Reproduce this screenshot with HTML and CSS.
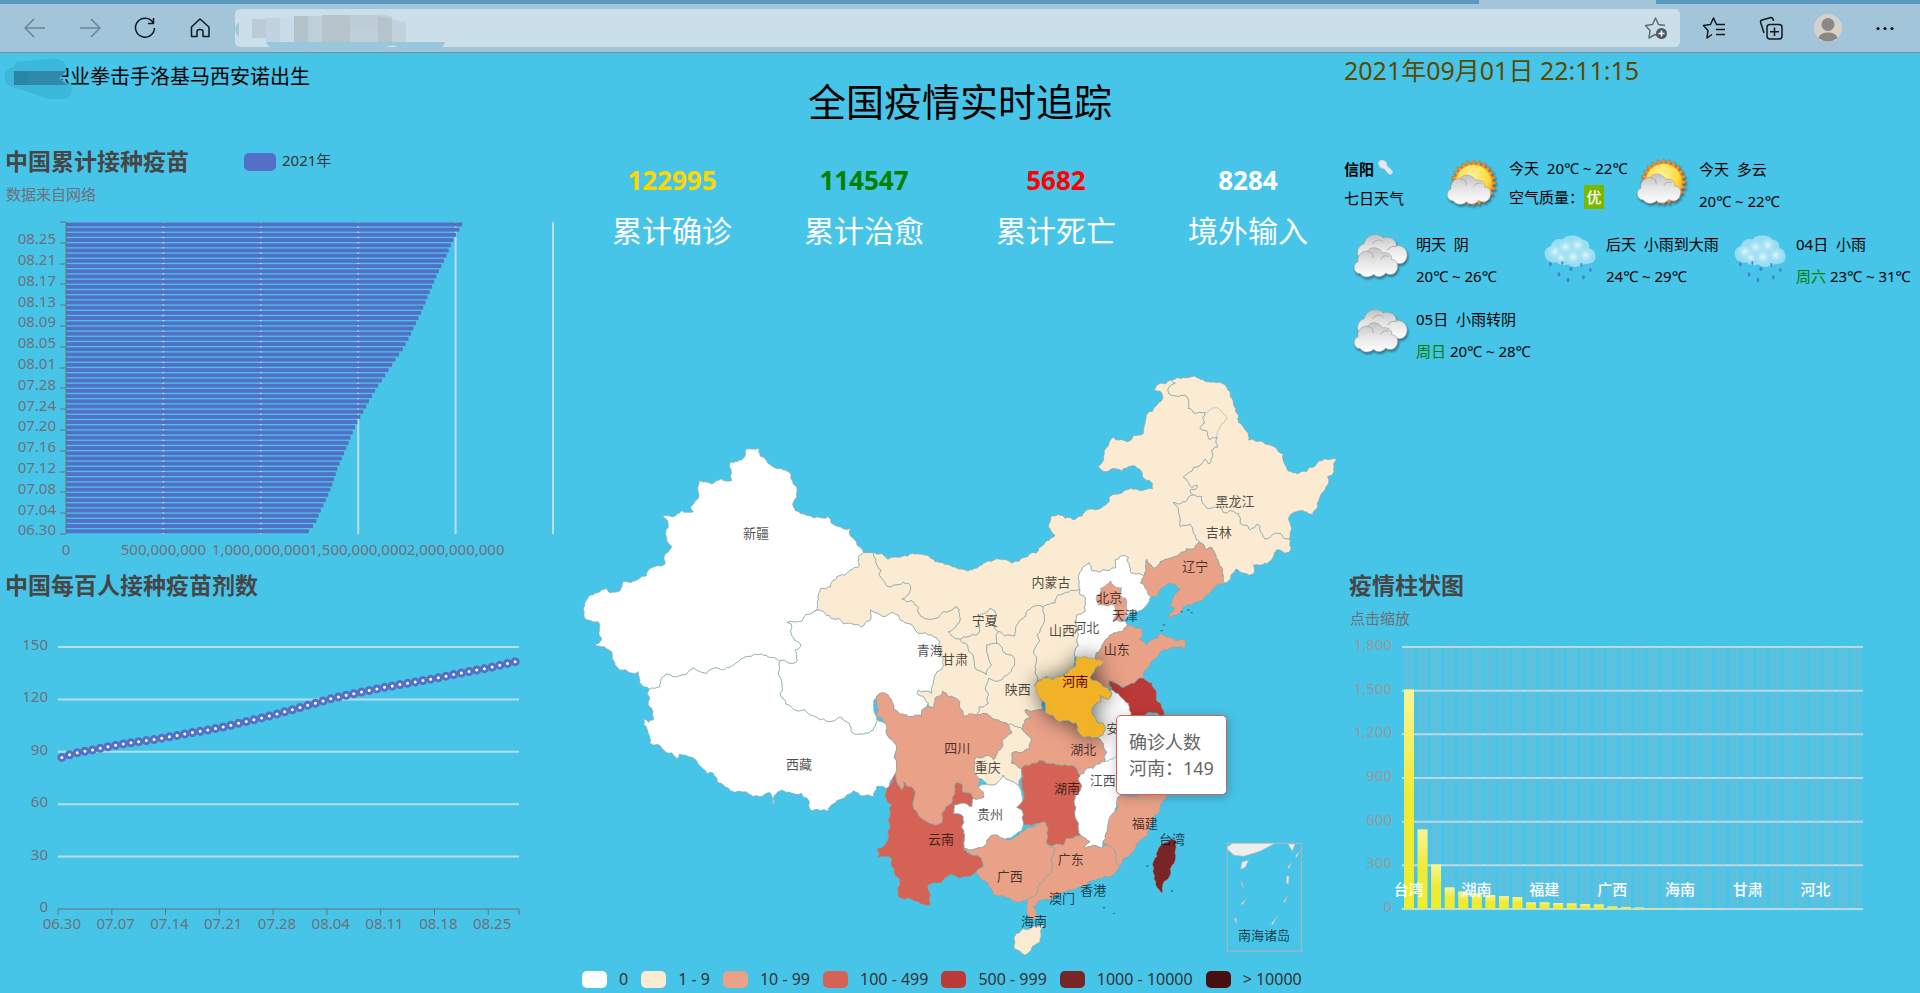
FILE: index.html
```html
<!DOCTYPE html>
<html lang="zh-CN">
    <head>
        <meta charset="UTF-8">
        <title>全国疫情实时追踪</title>
        <link rel="stylesheet" href="styles.css">
    </head>
    <body>
        <svg class="sprite" aria-hidden="true">
            <defs>
                <linearGradient id="cloud_fill" x1="0" y1="0" x2="0" y2="1">
                    <stop offset="0" stop-color="#c2c2c2"/>
                    <stop offset="0.45" stop-color="#e4e4e4"/>
                    <stop offset="1" stop-color="#ffffff"/>
                </linearGradient>
                <radialGradient id="sun_fill" cx="0.45" cy="0.3" r="0.75">
                    <stop offset="0" stop-color="#fff3a0"/>
                    <stop offset="0.6" stop-color="#fddc3c"/>
                    <stop offset="1" stop-color="#f8a81c"/>
                </radialGradient>
                <radialGradient id="rain_fill">
                    <stop offset="0" stop-color="#e2f8fd"/>
                    <stop offset="1" stop-color="#a2e1f3" stop-opacity="0"/>
                </radialGradient>
            </defs>
            <symbol id="overcast" viewBox="0 0 165 150">
                <path class="cloud" d="M25 80C6 66 12 38 34 32C38 5 75 -4 90 15C110 8 130 20 130 38C150 36 165 52 162 70C160 88 145 97 130 90L40 90Z"/>
                <path class="cloud_fold" d="M60 32C68 18 86 18 92 28M104 50C108 42 120 38 130 40"/>
                <path class="cloud" d="M22 122C0 122 -2 92 15 86C12 64 30 52 45 54C50 39 82 42 88 60C105 56 118 66 116 80C135 80 138 102 130 114C124 126 108 128 98 120C88 134 70 134 62 124C50 136 30 134 22 122Z"/>
                <path class="cloud_fold" d="M44 56C58 56 62 66 60 74M84 78C88 68 98 66 106 70"/>
            </symbol>
            <symbol id="sunny" viewBox="0 0 165 150">
                <polygon id="sun_rays" fill="#f4962a" stroke="#d56a14" stroke-width="2"/>
                <circle cx="83" cy="72" r="54" fill="url(#sun_fill)"/>
                <path class="cloud" d="M22 126C0 126 -2 96 15 90C12 68 30 56 45 58C50 43 82 46 88 64C105 60 118 70 116 84C135 84 138 106 130 118C124 130 108 132 98 124C88 138 70 138 62 128C50 140 30 138 22 126Z"/>
                <path class="cloud_fold" d="M44 60C58 60 62 70 60 78M84 82C88 72 98 70 106 74"/>
            </symbol>
            <symbol id="rainy" viewBox="0 0 165 150">
                <path fill="#97dcf1" d="M22 86C-2 78 0 44 24 40C26 22 46 14 58 20C66 4 108 2 118 20C136 20 142 36 138 46C158 48 164 76 150 88C136 96 124 92 116 96C100 106 84 102 76 94C62 100 48 96 42 88C34 90 28 90 22 86Z"/>
                <g fill="url(#rain_fill)">
                    <circle cx="36" cy="56" r="26"/><circle cx="68" cy="42" r="26"/><circle cx="104" cy="36" r="26"/>
                    <circle cx="128" cy="66" r="26"/><circle cx="90" cy="72" r="28"/><circle cx="54" cy="74" r="20"/>
                </g>
                <g fill="#4384d6">
                    <ellipse cx="22" cy="94" rx="4" ry="7"/><ellipse cx="58" cy="90" rx="3" ry="6"/><ellipse cx="84" cy="108" rx="5" ry="6"/>
                    <ellipse cx="115" cy="96" rx="3" ry="6"/><ellipse cx="142" cy="111" rx="4" ry="6"/><ellipse cx="48" cy="124" rx="4" ry="7"/>
                    <ellipse cx="121" cy="133" rx="4" ry="7"/><ellipse cx="75" cy="141" rx="4" ry="7"/>
                </g>
            </symbol>
        </svg>

        <header class="browser">
            <div class="tab_strip"><span class="tab_active"></span></div>
            <div class="toolbar">
                <button class="tool dim" aria-label="后退"><svg viewBox="0 0 24 24"><path d="M22 12H2.500M11 3L2 12L11 21"/></svg></button>
                <button class="tool dim" aria-label="前进"><svg viewBox="0 0 24 24"><path d="M2 12H21.500M13 3L22 12L13 21"/></svg></button>
                <button class="tool" aria-label="刷新"><svg viewBox="0 0 24 24"><path d="M20 6.500A9.500 9.500 0 1 0 21.500 12M20.500 2V7.500H15"/></svg></button>
                <button class="tool" aria-label="主页"><svg viewBox="0 0 24 24"><path d="M12 3L21 11V20.500H15V15.500Q15 13.500 12 13.500T9 15.500V20.500H3.500V11Z"/></svg></button>
                <div class="address">
                    <input class="address_input" type="text" aria-label="地址">
                    <svg class="address_mask" viewBox="0 0 220 46" aria-hidden="true">
                        <path fill="#a3c8dc" d="M4 13Q-4 20 4 28Z"/>
                        <path fill="#bcccd6" d="M17 10H31V29H17Z"/>
                        <path fill="#c2d2de" d="M31 9H59V33H31Z"/>
                        <path fill="#c8dbe8" d="M45 9H59V33H45Z"/>
                        <path fill="#b3c2cb" d="M59 7H73V33H59Z"/>
                        <path fill="#bfcfda" d="M73 7L150 6L157 8V33H73Z"/>
                        <path fill="#b5c3cb" d="M87 6H115V33H87ZM143 7L157 10V33H143Z"/>
                        <path fill="#bdccd5" d="M115 6H143V19H115Z"/>
                        <path fill="#c2d3de" d="M157 10L164 12L171 13V33H157Z"/>
                        <path fill="#97c8dd" d="M31 33H210Q208 39 202 41H170L158 36L140 41H86L76 38L60 41H40Q33 38 31 33Z"/>
                    </svg>
                    <button class="tool favorite" aria-label="收藏"><svg viewBox="0 0 24 24"><path d="M14 20L11 18.500L5 22L6 14.500L1.500 9.500L8.500 8.500L11.500 2L14.500 8.500L21 9.500"/><circle class="solid" cx="17.500" cy="17.500" r="5.500"/><path class="plus" d="M17.500 14.500V20.500M14.500 17.500H20.500"/></svg></button>
                </div>
                <button class="tool" aria-label="收藏夹"><svg viewBox="0 0 24 24"><path d="M10 18.500L5 22L6 14.500L1.500 9.500L8.500 8.500L11.500 2L14.500 8.500H23M14 13.500H23M14 18.500H23"/></svg></button>
                <button class="tool" aria-label="集锦"><svg viewBox="0 0 24 24"><path d="M5 17L1.500 6Q1.500 4 3 4L12 1.500Q14 1.500 14.500 5"/><rect x="8" y="8.500" width="15" height="14.500" rx="3"/><path d="M15.500 11.500V20M11 15.700H20"/></svg></button>
                <button class="tool avatar" aria-label="用户"><svg viewBox="0 0 28 28"><circle cx="14" cy="14" r="14" fill="#d5d1cd"/><circle cx="14" cy="10.500" r="6.500" fill="#8b8784"/><path fill="#8b8784" d="M4.500 24Q6 18.500 14 18.500T23.500 24Q14 31 4.500 24Z"/></svg></button>
                <button class="tool" aria-label="更多"><svg viewBox="0 0 24 24"><g class="dots"><circle cx="5" cy="12.500" r="1.600"/><circle cx="12" cy="12.500" r="1.600"/><circle cx="19" cy="12.500" r="1.600"/></g></svg></button>
            </div>
        </header>

        <main class="board">
            <section class="column">
                <div class="history">
                    美国职业拳击手洛基马西安诺出生
                    <svg class="smudge" viewBox="0 0 76 44" aria-hidden="true">
                        <path fill="#3bb7da" d="M5 16Q8 10 14 10L16 5L48 2Q68 0 66 14L60 22L71 28Q74 38 66 42H48L20 32Q2 30 5 16Z"/>
                        <path fill="#2787a4" d="M14 14H28V28H14Z"/>
                        <path fill="#2f8aa9" d="M28 14H66L59 22L68 28H28Z"/>
                    </svg>
                </div>
                <svg class="chart" id="total_chart" viewBox="0 0 576 420" role="img" aria-label="中国累计接种疫苗"></svg>
                <svg class="chart" id="hundred_chart" viewBox="0 0 576 431" role="img" aria-label="中国每百人接种疫苗剂数"></svg>
            </section>

            <section class="column">
                <h1 class="title">全国疫情实时追踪</h1>
                <div class="stats">
                    <div class="stat"><b class="number gold">122995</b><span class="caption">累计确诊</span></div>
                    <div class="stat"><b class="number green">114547</b><span class="caption">累计治愈</span></div>
                    <div class="stat"><b class="number red">5682</b><span class="caption">累计死亡</span></div>
                    <div class="stat"><b class="number">8284</b><span class="caption">境外输入</span></div>
                </div>
                <div class="map">
                    <svg class="chart" id="china_map" viewBox="0 0 2304 1794" role="img" aria-label="疫情地图"></svg>
                    <div class="tooltip">确诊人数<br>河南：149</div>
                </div>
                <ul class="legend">
                    <li><i class="swatch level_0"></i>0</li>
                    <li><i class="swatch level_1"></i>1 - 9</li>
                    <li><i class="swatch level_2"></i>10 - 99</li>
                    <li><i class="swatch level_3"></i>100 - 499</li>
                    <li><i class="swatch level_4"></i>500 - 999</li>
                    <li><i class="swatch level_5"></i>1000 - 10000</li>
                    <li><i class="swatch level_6"></i>&gt; 10000</li>
                </ul>
            </section>

            <section class="column">
                <time class="clock">2021年09月01日 22:11:15</time>
                <div class="weather">
                    <div class="weather_row">
                        <div class="place">
                            <div><b>信阳</b><svg class="wrench" viewBox="0 0 16 16"><path fill="#e6e9ee" stroke="#cfd6de" d="M1 1L4 0L8 2L9 6L15 12L14 15L11 15L6 9L2 8L0 4Z"/></svg></div>
                            <div>七日天气</div>
                        </div>
                        <div class="day now">
                            <svg class="icon"><use href="#sunny"/></svg>
                            <div><p>今天&nbsp; 20℃ ~ 22℃</p><p>空气质量：<span class="badge">优</span></p></div>
                        </div>
                        <div class="day">
                            <svg class="icon"><use href="#sunny"/></svg>
                            <div><p>今天&nbsp; 多云</p><p>20℃ ~ 22℃</p></div>
                        </div>
                    </div>
                    <div class="weather_row later">
                        <div class="day">
                            <svg class="icon"><use href="#overcast"/></svg>
                            <div><p>明天&nbsp; 阴</p><p>20℃ ~ 26℃</p></div>
                        </div>
                        <div class="day">
                            <svg class="icon rain"><use href="#rainy"/></svg>
                            <div><p>后天&nbsp; 小雨到大雨</p><p>24℃ ~ 29℃</p></div>
                        </div>
                        <div class="day">
                            <svg class="icon rain"><use href="#rainy"/></svg>
                            <div><p>04日&nbsp; 小雨</p><p><span class="weekend">周六</span> 23℃ ~ 31℃</p></div>
                        </div>
                    </div>
                    <div class="weather_row later">
                        <div class="day">
                            <svg class="icon"><use href="#overcast"/></svg>
                            <div><p>05日&nbsp; 小雨转阴</p><p><span class="weekend">周日</span> 20℃ ~ 28℃</p></div>
                        </div>
                    </div>
                </div>
                <svg class="chart bottom" id="bar_chart" viewBox="0 0 576 431" role="img" aria-label="疫情柱状图"></svg>
            </section>
        </main>
        <script src="map.js"></script>
        <script src="charts.js"></script>
    </body>
</html>
```
FILE: styles.css
```css
* { box-sizing: border-box; }

body {
    margin: 0;
    background: #47c5e9;
    color: #000000;
    font-family: "Noto Sans", "Noto Sans CJK SC", sans-serif;
    font-size: 15px;
}

p { margin: 0; }

.sprite { position: absolute; width: 0; height: 0; }
.cloud { fill: url(#cloud_fill); stroke: #a2a2a2; stroke-width: 2; }
.cloud_fold { fill: none; stroke: #ababab; stroke-width: 3; stroke-linecap: round; }

/* browser bar */
.browser {
    background: #a3c5d9;
    border-bottom: 1px solid #6f8fa3;
}

.tab_strip {
    display: flex;
    justify-content: flex-end;
    height: 4px;
    padding-right: 264px;
    background: #5c99bf;
}

.tab_active { width: 177px; background: #a3c5d9; }

.toolbar {
    display: flex;
    align-items: center;
    height: 48px;
    padding: 0 7px;
}

.tool {
    display: flex;
    align-items: center;
    justify-content: center;
    width: 55px;
    height: 38px;
    padding: 0;
    border: 0;
    background: none;
}

.address ~ .tool { width: 57px; }
.tool svg { width: 24px; height: 24px; fill: none; stroke: #10181c; stroke-width: 1.5; stroke-linejoin: round; }
.tool.dim svg { stroke: #6b8597; }
.tool.avatar svg { width: 28px; height: 28px; stroke: none; }
.tool .dots { fill: #10181c; stroke: none; }
.tool .solid { fill: #4e5960; stroke: none; }
.tool .plus { stroke: #ffffff; }

.address {
    position: relative;
    display: flex;
    flex: 1;
    height: 38px;
    margin: 0 5px 0 8px;
    border-radius: 5px;
    background: #cadfea;
}

.address_input { flex: 1; border: 0; outline: 0; background: none; }
.address_mask { position: absolute; left: 0; top: 0; width: 220px; height: 46px; }
.tool.favorite { width: 48px; }
.tool.favorite svg { stroke: #5f6c74; }

/* board */
.board {
    display: grid;
    grid-template-columns: 30% 40% 30%;
}

.column { display: flex; flex-direction: column; min-width: 0; }
.chart { display: block; width: 100%; height: auto; }
.chart.bottom { margin-top: auto; }

.history {
    position: relative;
    height: 89px;
    padding: 9px 10px;
    font-size: 20px;
    line-height: 30px;
}

.smudge { position: absolute; left: 0; top: 4px; width: 76px; height: 44px; }

.title {
    height: 89px;
    margin: 0;
    padding-top: 20px;
    font-size: 38px;
    font-weight: 400;
    line-height: 56px;
    text-align: center;
}

.stats {
    display: grid;
    grid-template-columns: repeat(4, 1fr);
    padding-top: 17px;
    color: #ffffff;
    text-align: center;
}

.stat { display: flex; flex-direction: column; gap: 9px; line-height: 42px; }
.number { font-size: 26px; }
.caption { font-size: 30px; }
.gold { color: #ffd700; }
.green { color: #008000; }
.red { color: #ff0000; }

.map { position: relative; margin-top: 118px; }

.tooltip {
    position: absolute;
    left: 70.3%;
    top: 57.7%;
    width: 111px;
    padding: 13px 12px;
    border: 1px solid #d56355;
    border-radius: 5px;
    background: #ffffff;
    box-shadow: 1px 2px 12px rgba(0, 0, 0, 0.25);
    color: #666666;
    font-size: 18px;
    line-height: 26px;
    white-space: nowrap;
}

.legend {
    display: flex;
    gap: 13px;
    margin: 1px 0 4px;
    padding: 0 0 0 6px;
    list-style: none;
    color: #333333;
    font-size: 16px;
    line-height: 20px;
    white-space: nowrap;
}

.legend li { display: flex; align-items: center; gap: 12px; }
.swatch { width: 25px; height: 17px; border-radius: 5px; }
.level_0 { background: #ffffff; }
.level_1 { background: #faebd2; }
.level_2 { background: #e9a188; }
.level_3 { background: #d56355; }
.level_4 { background: #bb3937; }
.level_5 { background: #772526; }
.level_6 { background: #480f10; }

/* clock and weather */
.clock { color: #5c4a00; font-size: 25px; line-height: 34px; }
.weather { margin-top: 66px; }
.weather_row { display: flex; height: 75px; }
.weather_row.later { padding-left: 5px; }
.place { width: 98px; padding-top: 2px; line-height: 29px; }
.wrench { width: 16px; height: 15px; margin-left: 4px; }
.day { display: flex; width: 190px; gap: 8px; padding-left: 4px; line-height: 32px; white-space: nowrap; }
.day.now { padding-top: 1px; line-height: 29px; }
.icon { width: 55px; height: 50px; margin-top: 5px; filter: drop-shadow(1px 2px 1px rgba(0, 0, 0, 0.4)); }
.icon.rain { filter: none; }
.badge { display: inline-block; width: 20px; background: #7ab800; color: #ffffff; font-weight: 500; line-height: 24px; text-align: center; }
.weekend { color: #008000; }

/* svg parts */
.chart_title { font-size: 23px; font-weight: 700; fill: #464646; }
.chart_sub { font-size: 15px; fill: #6e7079; }
.chart_legend { font-size: 15px; fill: #333333; }
.label { font-size: 15px; fill: #6e7079; }
.label.grey { fill: #999999; }
.label.inside { fill: #ffffff; font-weight: 500; }
.end { text-anchor: end; }
.middle { text-anchor: middle; }
.grid { stroke: #e0e6f1; stroke-opacity: 0.75; stroke-width: 2; }
.axis { fill: none; stroke: #6e7079; stroke-width: 1; }
.bar { fill: #5470c6; }
.bar_back { fill: #b4b4b4; fill-opacity: 0.2; }
.bar_front { fill: url(#bar_fill); }
.line { fill: none; stroke: #5470c6; stroke-width: 2; }
.point { fill: #ffffff; stroke: #5470c6; stroke-width: 3; }

.province { stroke: #8aa5a8; stroke-width: 2; stroke-linejoin: round; }
.province.active { filter: drop-shadow(0 0 30px rgba(0, 0, 0, 0.6)); }
.province_line { fill: none; stroke: #a9b9b0; stroke-width: 2; }
.province_name { font-size: 39px; fill: #000000; fill-opacity: 0.7; text-anchor: middle; }
.province_name.active { fill: #640000; fill-opacity: 1; }
.island { fill: #1f6f8a; }
.sea_box { fill: none; stroke: #b5b5b5; stroke-width: 3; }
.sea_part { fill: #eeeeee; stroke: #b5b5b5; stroke-width: 2; }
```
FILE: map.js
```js
// province outlines, drawn on three sheets: west, north east, south east
const sheets = { w: [-48, 150], n: [1092, -30], s: [852, 570] };

const none = "#ffffff", few = "#faebd2", some = "#e9a188", many = "#d56355", more = "#bb3937", most = "#772526";

const provinces = [
    ["n", few, "-200,577 -110,588 -65,582 -30,592 -15,605 0,608 50,625 85,633 130,610 175,597 255,592 290,578 310,555 345,527 325,500 332,470 355,463 375,475 405,479 440,450 475,448 502,430 510,408 545,400 580,388 637,387 637,370 605,335 575,318 545,333 520,325 487,333 475,318 490,290 518,232 560,245 610,220 615,190 645,140 667,118 662,95 642,90 660,70 695,60 706,70 685,95 710,108 735,105 745,145 765,160 795,157 793,190 780,203 800,212 808,238 832,232 832,262 815,270 805,312 795,297 730,352 755,383 772,375 770,385 750,392 760,405 745,412 720,432 700,428 715,445 722,500 750,492 770,540 778,545 765,565 720,580 690,595 640,625 620,598 612,648 575,640 565,592 545,587 525,600 528,622 490,630 455,632 447,608 430,620 415,655 420,690 385,697 355,705 345,730 310,740 265,750 240,780 225,827 195,828 175,815 162,790 160,750 150,745 120,765 110,825 60,838 25,815 58,760 50,740 10,755 -35,778 -65,760 -65,742 -115,717 -92,700 -95,670 -155,680 -183,640 -177,630"],
    ["n", few, "695,60 765,48 800,65 830,68 850,72 870,95 880,125 895,165 912,205 925,240 960,243 990,255 1015,275 1030,282 1035,315 1045,333 1100,335 1125,318 1190,298 1180,312 1182,335 1163,350 1155,390 1140,410 1118,465 1078,452 1045,475 1055,505 1052,543 1020,520 975,538 960,500 950,493 930,510 900,490 895,460 850,457 845,445 800,445 785,410 760,405 750,392 770,385 772,375 755,383 730,352 795,297 805,312 815,270 832,262 832,232 808,238 800,212 780,203 793,190 795,157 765,160 745,145 735,105 710,108 685,95 706,70"],
    ["n", few, "760,405 785,410 800,445 845,445 850,457 895,460 900,490 930,510 950,493 960,500 975,538 1020,520 1052,543 1052,570 1035,580 1010,570 1000,590 985,608 940,615 940,642 890,627 862,668 848,672 850,650 835,605 825,580 815,562 800,570 778,545 770,540 750,492 722,500 715,445 700,428 720,432 745,412"],
    ["n", some, "778,545 800,570 815,562 825,580 835,605 850,650 848,672 800,705 790,720 740,735 700,765 682,773 688,762 705,745 688,738 700,715 720,690 705,672 685,670 660,690 655,705 632,712 620,690 600,668 612,648 620,598 640,625 690,595 720,580 765,565"],
    ["n", none, "420,690 415,655 430,620 447,608 455,632 490,630 528,622 525,600 545,587 565,592 575,640 612,648 600,668 620,690 632,712 612,745 595,755 570,752 560,770 553,780 562,795 545,815 505,835 490,850 468,880 472,905 405,890 403,880 415,858 405,790 410,765 435,755 435,712 420,705"],
    ["n", some, "512,662 525,680 545,683 540,705 555,722 545,735 520,735 505,738 475,735 472,705 485,700 482,685"],
    ["n", some, "522,738 545,735 553,712 560,740 558,768 545,785 520,780"],
    ["s", few, "660,90 625,97 595,105 585,130 550,140 530,225 538,245 525,320 523,375 565,352 600,350 645,320 645,290 643,280 655,258 645,190 650,165 675,155 675,112 660,105"],
    ["s", few, "550,140 505,150 480,180 465,227 435,228 415,215 408,250 455,285 460,320 425,360 385,355 377,380 385,430 358,440 350,465 385,465 445,495 490,512 495,480 510,475 495,450 548,445 545,420 523,375 525,320 538,245 530,225"],
    ["s", few, "300,238 350,225 360,165 390,145 400,150 402,190 415,215 408,250 380,255 385,290 395,315 378,345 345,325 340,290 325,270"],
    ["s", few, "10,-22 40,-23 63,30 57,40 85,80 145,70 148,100 125,117 175,142 175,160 205,178 250,155 290,140 298,160 265,215 300,238 325,270 340,290 345,325 378,345 395,315 385,290 380,255 408,250 455,285 460,320 425,360 385,355 377,380 385,430 358,440 350,465 310,470 300,425 265,410 248,393 225,415 220,445 205,440 205,430 172,400 175,390 215,400 220,370 225,345 248,320 250,295 235,270 240,245 215,225 150,192 100,158 70,170 32,150 28,183 5,202 -50,192 -65,175 -100,167 -115,153 -140,157 -125,120 -118,85 -88,80 -70,50 -30,30 -3,17 -5,-10"],
    ["w", none, "760,577 785,573 800,587 835,595 850,612 905,622 928,603 932,570 970,590 1000,578 1050,612 1115,645 1140,665 1135,690 1150,715 1148,740 1125,765 1120,790 1115,820 1075,810 1072,820 1105,850 1085,870 1085,892 1045,890 1000,868 985,825 965,818 950,828 947,885 950,895 945,920 905,942 875,937 868,910 845,892 822,903 760,888 700,868 662,828 665,785 655,765 662,722 712,722 705,690 722,675 693,640 693,612 680,608"],
    ["w", none, "268,808 245,795 235,755 190,750 165,735 155,695 105,675 125,660 115,605 80,600 70,568 85,530 140,505 150,518 180,512 190,485 235,478 315,432 318,400 335,380 322,300 308,290 365,272 400,275 392,260 418,180 455,192 515,182 512,125 550,115 558,88 595,85 600,108 640,140 685,155 710,200 700,260 720,280 805,290 870,325 890,370 910,398 895,410 897,437 870,450 830,470 812,500 782,505 775,540 760,577 680,608 693,612 693,640 722,675 705,690 712,722 662,722 612,706 540,720 510,742 440,760 400,743 370,765 318,762 300,800"],
    ["w", none, "268,808 262,820 265,855 280,900 265,907 252,897 262,930 268,970 310,990 350,1018 358,1003 385,1010 440,1060 460,1060 495,1100 530,1115 580,1130 630,1118 637,1155 650,1120 665,1110 725,1120 745,1140 755,1172 805,1172 830,1142 880,1112 940,1130 950,1100 990,1110 1000,1075 1007,1060 1000,965 975,910 950,895 945,920 905,942 875,937 868,910 845,892 822,903 760,888 700,868 662,828 665,785 655,765 662,722 612,706 540,720 510,742 440,760 400,743 370,765 318,762 300,800"],
    ["s", many, "97,655 107,640 110,665 125,690 130,665 165,705 210,790 245,788 255,750 285,700 285,672 305,672 308,695 335,700 335,740 282,735 280,760 310,770 305,800 315,825 312,870 365,895 370,915 350,932 325,950 230,970 205,975 210,1035 170,1025 150,1015 115,1010 120,960 100,925 95,895 55,895 52,865 90,795 95,735 78,715 80,690"],
    ["s", some, "65,398 50,408 52,435 47,465 75,490 100,545 107,640 110,665 125,690 130,665 165,705 210,790 245,788 255,750 285,700 285,672 305,672 308,695 335,700 340,715 372,712 370,690 355,680 355,655 342,635 350,590 400,600 420,570 455,520 445,495 385,465 350,465 310,470 300,425 265,410 248,393 225,415 220,445 205,440 185,450 185,472 145,470 100,448 85,405"],
    ["s", few, "445,495 490,512 515,540 510,565 455,580 455,610 485,625 485,650 483,690 460,665 430,645 415,665 390,675 355,655 342,635 350,590 400,600 420,570 455,520"],
    ["s", some, "495,450 548,445 555,455 595,485 648,488 650,510 705,533 730,550 735,605 700,625 660,645 640,618 590,615 540,600 485,625 455,610 455,580 510,565 515,540 490,512 495,480 510,475"],
    ["s", none, "745,380 790,400 810,430 815,462 900,465 900,600 735,605 730,550 705,533 728,525 730,490 710,485 695,455 720,425 720,405 745,418 755,400"],
    ["s", some, "802,195 845,205 848,220 840,240 860,255 875,240 905,220 940,235 975,240 975,265 950,262 910,270 880,300 855,330 850,355 822,370 815,383 785,380 750,362 745,385 715,365 690,352 705,325 735,305 712,305 708,280 730,250 745,235 785,215"],
    ["s", more, "748,362 785,382 822,370 850,355 890,395 910,450 915,475 815,475 805,430 775,400 748,375"],
    ["s", none, "660,645 700,625 735,605 800,590 840,680 775,710 770,740 745,790 728,850 725,865 672,865 690,845 662,825 655,790 645,715 665,680"],
    ["s", many, "485,625 540,600 590,615 640,618 660,645 665,680 645,715 655,790 662,825 620,835 610,855 570,862 548,845 560,790 535,790 515,797 490,795 490,765 485,750 470,742 490,720"],
    ["s", none, "355,680 390,675 415,665 430,645 460,665 483,690 488,715 470,742 485,750 490,765 490,795 435,838 405,825 370,860 312,865 315,825 305,800 310,770 280,760 282,735 335,740 340,715 372,712 370,695"],
    ["s", some, "312,865 370,860 405,825 435,838 490,815 555,785 562,855 585,865 575,930 535,980 500,1022 450,1015 405,1005 385,970 350,932 370,915 365,895"],
    ["s", some, "570,862 610,855 620,835 662,825 690,845 672,865 725,865 745,855 765,870 778,920 750,950 700,962 650,985 590,1005 545,1020 520,1040 530,1075 510,1075 500,1050 500,1022 535,980 575,930 585,865"],
    ["s", some, "775,740 775,710 835,705 920,705 900,740 880,775 875,800 840,840 805,890 778,920 765,870 745,855 728,850 745,790"],
    ["s", few, "490,1105 550,1095 535,1150 515,1165 498,1185 462,1165 462,1130"],
    ["s", most, "935,835 950,845 945,880 935,920 912,965 908,1000 880,940 890,890 905,855"],
    ["s", "#f1b227", "648,290 708,300 735,305 705,325 690,352 715,365 745,385 755,400 745,418 720,405 720,425 695,455 710,485 730,490 728,525 705,533 650,510 648,488 595,485 555,455 545,420 525,378 565,352 600,350 645,320", "active"]
];

const lines = [["n", "795,157 830,143 862,175 832,232"], ["s", "835,705 840,720 870,735 900,740"]];

const names = [
    ["w", 588, 343, "新疆"], ["w", 717, 1036, "西藏"],
    ["n", 885, 427, "黑龙江"], ["n", 836, 518, "吉林"], ["n", 766, 622, "辽宁"],
    ["s", 573, 70, "内蒙古"], ["s", 748, 115, "北京"], ["s", 795, 168, "天津"], ["s", 374, 184, "宁夏"],
    ["s", 606, 213, "山西"], ["s", 679, 205, "河北"], ["s", 209, 273, "青海"], ["s", 285, 300, "甘肃"],
    ["s", 770, 271, "山东"], ["s", 473, 390, "陕西"], ["s", 646, 367, "河南", "active"], ["s", 670, 570, "湖北"],
    ["s", 292, 567, "四川"], ["s", 383, 623, "重庆"], ["s", 621, 688, "湖南"], ["s", 728, 663, "江西"],
    ["s", 778, 508, "安徽"], ["s", 390, 766, "贵州"], ["s", 243, 840, "云南"], ["s", 854, 793, "福建"],
    ["s", 936, 840, "台湾"], ["s", 449, 951, "广西"], ["s", 632, 901, "广东"], ["s", 606, 1018, "澳门"],
    ["s", 700, 993, "香港"], ["s", 522, 1086, "海南"], ["s", 1212, 1127, "南海诸岛"]
];

const islands = [[862, 918], [936, 993], [762, 1060], [732, 1043], [912, 195], [905, 212], [965, 155], [985, 150], [995, 158]];

const sea_parts = [
    "1102,860 1118,850 1245,850 1200,874 1152,889 1122,886 1102,868", "1284,852 1305,852 1297,874",
    "1320,872 1310,892 1306,888", "1166,900 1156,922 1142,928 1146,906", "1294,909 1286,927 1284,920",
    "1280,948 1287,948 1286,971 1280,971", "1144,962 1151,983 1147,980", "1160,1016 1146,1035 1144,1030",
    "1282,1008 1274,1028 1271,1024", "1122,1075 1129,1076 1131,1093", "1252,1068 1238,1094 1234,1092"
];

function read_points(sheet, text) {
    return text.split(" ").map(p => p.split(",").map(Number)).map(p => [p[0] + sheets[sheet][0], p[1] + sheets[sheet][1]]);
}

// bends an edge a little, the same way for both neighbours that share it
function bend(a, b, depth) {
    const dx = b[0] - a[0], dy = b[1] - a[1];
    if (depth == 0 || Math.hypot(dx, dy) < 9) return [a];
    const flip = (a[0] - b[0] || a[1] - b[1]) > 0 ? -1 : 1;
    const seed = Math.sin((a[0] + b[0]) * 12.9898 + (a[1] + b[1]) * 78.233) * 43758.5453;
    const k = (seed - Math.floor(seed) - 0.5) * 0.38 * flip;
    const m = [(a[0] + b[0]) / 2 - dy * k, (a[1] + b[1]) / 2 + dx * k];
    return bend(a, m, depth - 1).concat(bend(m, b, depth - 1));
}

function outline(points, closed) {
    let out = [];
    for (let i = 0; i < points.length - (closed ? 0 : 1); i++) {
        out = out.concat(bend(points[i], points[(i + 1) % points.length], 3));
    }
    if (!closed) out.push(points[points.length - 1]);
    return "M" + out.map(p => p[0].toFixed(1) + " " + p[1].toFixed(1)).join("L") + (closed ? "Z" : "");
}

function draw_map() {
    let svg = "";
    for (const [sheet, color, text, state] of provinces) {
        svg += `<path class="province ${state || ""}" fill="${color}" d="${outline(read_points(sheet, text), true)}"/>`;
    }
    for (const [sheet, text] of lines) {
        svg += `<path class="province_line" d="${outline(read_points(sheet, text), false)}"/>`;
    }
    const [sx, sy] = sheets.s;
    for (const [x, y] of islands) {
        svg += `<ellipse class="island" cx="${x + sx}" cy="${y + sy}" rx="4" ry="2"/>`;
    }
    svg += `<rect class="sea_box" x="${1102 + sx}" y="${850 + sy}" width="222" height="323"/>`;
    for (const part of sea_parts) {
        svg += `<polygon class="sea_part" points="${read_points("s", part).join(" ")}"/>`;
    }
    for (const [sheet, x, y, name, state] of names) {
        svg += `<text class="province_name ${state || ""}" x="${x + sheets[sheet][0]}" y="${y + sheets[sheet][1] + 12}">${name}</text>`;
    }
    document.getElementById("china_map").innerHTML = svg;
}

draw_map();
```
FILE: charts.js
```js
// doses per hundred people, one value a day from 06.30
const doses = [
    86.8, 88.3, 89.5, 90.3, 91.1, 92.0, 92.9, 93.7, 94.5, 95.2, 95.8, 96.4, 97.0, 97.8, 98.6,
    99.4, 100.2, 101.0, 101.7, 102.5, 103.3, 104.2, 105.2, 106.3, 107.3, 108.3, 109.4, 110.5, 111.6, 112.9,
    114.1, 115.3, 116.6, 117.8, 119.1, 120.4, 121.4, 122.4, 123.3, 124.2, 125.1, 126.0, 126.9, 127.7, 128.5,
    129.2, 130.0, 130.8, 131.6, 132.4, 133.3, 134.2, 135.1, 136.0, 136.8, 137.6, 138.5, 139.5, 140.6, 141.6
];
const four_days = ["06.30", "07.04", "07.08", "07.12", "07.16", "07.20", "07.24", "07.28", "08.01", "08.05", "08.09", "08.13", "08.17", "08.21", "08.25"];
const weeks = ["06.30", "07.07", "07.14", "07.21", "07.28", "08.04", "08.11", "08.18", "08.25"];
const cases = [1509, 547, 307, 149, 121, 108, 96, 89, 82, 46, 46, 41, 39, 34, 32, 18, 14, 11, 6, 5, 4, 3, 3, 2, 1, 1, 1, 0, 0, 0, 0, 0, 0, 0];
const case_names = ["台湾", "湖南", "福建", "广西", "海南", "甘肃", "河北"];

function text(cls, x, y, value) {
    return `<text class="${cls}" x="${x}" y="${y}">${value}</text>`;
}

function draw_total() {
    const left = 66, top = 80, bottom = 392, step = 97.4, band = (bottom - top) / doses.length;
    let svg = text("chart_title", 5, 28, "中国累计接种疫苗") + text("chart_sub", 6, 58, "数据来自网络");
    svg += `<rect class="bar" x="244" y="11" width="32" height="18" rx="5"/>` + text("chart_legend", 282, 24, "2021年");
    for (let i = 1; i < 6; i++) {
        svg += `<line class="grid" x1="${left + i * step}" x2="${left + i * step}" y1="${top}" y2="${bottom}"/>`;
    }
    for (let i = 0; i < 5; i++) {
        svg += text("label middle", left + i * step, 413, (i * 500000000).toLocaleString("en-US"));
    }
    doses.forEach((d, i) => {
        svg += `<rect class="bar" x="${left}" y="${bottom - (i + 0.9) * band}" width="${d * 0.01436 / 0.5 * step}" height="${band * 0.75}"/>`;
    });
    svg += `<path class="axis" d="M${left} ${top}V${bottom}M${left} ${top}h-6`;
    four_days.forEach((d, i) => { svg += `M${left} ${Math.round(bottom - i * 4 * band)}h-6`; });
    svg += `"/>`;
    four_days.forEach((d, i) => { svg += text("label end", 56, bottom - (i * 4 + 0.5) * band + 4, d); });
    document.getElementById("total_chart").innerHTML = svg;
}

function draw_hundred() {
    const left = 58, right = 519, top = 85, bottom = 347, band = (right - left) / doses.length;
    let svg = text("chart_title", 5, 32, "中国每百人接种疫苗剂数");
    for (let i = 0; i <= 5; i++) {
        const y = bottom - (bottom - top) / 5 * i;
        if (i > 0) svg += `<line class="grid" x1="${left}" x2="${right}" y1="${y}" y2="${y}"/>`;
        svg += text("label end", 48, y + 3, i * 30);
    }
    svg += `<path class="axis" d="M${left} ${bottom}H${right}v6`;
    weeks.forEach((d, i) => { svg += `M${left + i * 7 * band} ${bottom}v6`; });
    svg += `"/>`;
    weeks.forEach((d, i) => { svg += text("label middle", left + (i * 7 + 0.5) * band, 367, d); });
    const points = doses.map((d, i) => [left + (i + 0.5) * band, bottom - d / 150 * (bottom - top)]);
    svg += `<polyline class="line" points="${points.join(" ")}"/>`;
    for (const p of points) svg += `<circle class="point" cx="${p[0]}" cy="${p[1]}" r="3"/>`;
    document.getElementById("hundred_chart").innerHTML = svg;
}

function draw_cases() {
    const left = 58, right = 519, top = 85, bottom = 347, band = (right - left) / cases.length;
    let svg = `<defs><linearGradient id="bar_fill" x1="0" y1="0" x2="0" y2="1"><stop offset="0" stop-color="#f7f594"/><stop offset="0.5" stop-color="#f0ea32"/><stop offset="1" stop-color="#eded2f"/></linearGradient></defs>`;
    svg += text("chart_title", 5, 32, "疫情柱状图") + text("chart_sub", 6, 62, "点击缩放");
    for (let i = 0; i <= 6; i++) {
        const y = bottom - (bottom - top) / 6 * i;
        svg += `<line class="grid" x1="${left}" x2="${right}" y1="${y}" y2="${y}"/>`;
        svg += text("label grey end", 48, y + 3, (i * 300).toLocaleString("en-US"));
    }
    cases.forEach((c, i) => {
        const x = left + i * band + 2, h = c / 1800 * (bottom - top);
        svg += `<rect class="bar_back" x="${x}" y="${top}" width="10" height="${bottom - top}"/>`;
        svg += `<rect class="bar_front" x="${x}" y="${bottom - h}" width="10" height="${h}"/>`;
    });
    case_names.forEach((n, i) => { svg += text("label inside middle", left + (i * 5 + 0.5) * band, 333, n); });
    document.getElementById("bar_chart").innerHTML = svg;
}

function draw_rays() {
    const points = [];
    for (let i = 0; i < 48; i++) {
        const r = i % 2 ? 56 : 70, a = Math.PI * i / 24;
        points.push((83 + r * Math.sin(a)).toFixed(1) + "," + (72 - r * Math.cos(a)).toFixed(1));
    }
    document.getElementById("sun_rays").setAttribute("points", points.join(" "));
}

draw_total();
draw_hundred();
draw_cases();
draw_rays();
```
